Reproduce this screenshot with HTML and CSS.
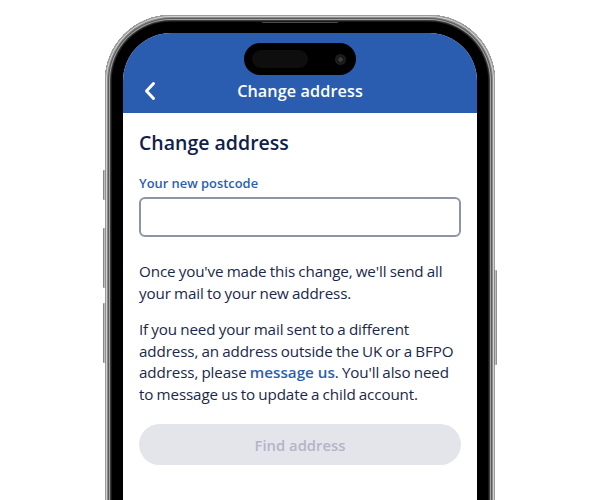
FILE: index.html
```html
<!DOCTYPE html>
<html lang="en">
<head>
<meta charset="utf-8">
<title>Change address</title>
<link rel="stylesheet" href="styles.css">
</head>
<body>
<div class="stage">
  <div class="phone">
    <span class="side-btn action"></span>
    <span class="side-btn vol-up"></span>
    <span class="side-btn vol-down"></span>
    <span class="side-btn power"></span>
    <div class="bezel">
      <span class="speaker"></span>
      <div class="screen">
        <header class="appbar">
          <div class="island"><span class="island-sensor"></span><span class="island-cam"></span></div>
          <div class="nav">
            <div class="nav-left">
              <svg class="back" width="14" height="20" viewBox="0 0 14 20" aria-hidden="true"><path d="M10.5 2.5 L3.5 10 L10.5 17.5"/></svg>
            </div>
            <h1 class="nav-title">Change address</h1>
            <div class="nav-right"></div>
          </div>
        </header>
        <main class="content">
          <h2 class="title">Change address</h2>
          <label class="label" for="postcode">Your new postcode</label>
          <input id="postcode" class="field" type="text">
          <p class="para">Once you've made this change, we'll send all your mail to your new address.</p>
          <p class="para">If you need your mail sent to a different address, an address outside the UK or a BFPO address, please <a class="link" href="#">message us</a>. You'll also need to message us to update a child account.</p>
          <button class="cta" type="button" disabled>Find address</button>
        </main>
      </div>
    </div>
  </div>
</div>
</body>
</html>
```

FILE: styles.css
```css
html, body {
  margin: 0;
  padding: 0;
  background: #ffffff;
}

body {
  width: 600px;
  height: 500px;
  overflow: hidden;
  font-family: "Open Sans", "Noto Sans", sans-serif;
}

.stage {
  display: flex;
  justify-content: center;
  padding-top: 15px;
  height: 500px;
  box-sizing: border-box;
  overflow: hidden;
}

.phone {
  position: relative;
  flex: none;
  width: 390px;
  height: 780px;
  box-sizing: border-box;
  padding: 7px;
  border-radius: 66px;
  background: #000;
  box-shadow:
    inset 0 0 0 1px #9a9a9a,
    inset 0 0 0 2px #d2d2d2,
    inset 0 0 0 3px #8a8a8a,
    inset 0 0 0 4px #5c5c5c,
    inset 0 0 0 5px #a0a0a0,
    inset 0 0 0 6px #3a3a3a,
    inset 0 0 0 7px #1a1a1a;
}

.side-btn {
  position: absolute;
  width: 3px;
  border-radius: 1px;
  background: linear-gradient(to right, #6a6a6a, #bdbdbd 50%, #7a7a7a);
}

.side-btn.action { left: -2px; top: 155px; height: 30px; }
.side-btn.vol-up { left: -2px; top: 213px; height: 60px; }
.side-btn.vol-down { left: -2px; top: 288px; height: 60px; }
.side-btn.power { right: -2px; top: 255px; height: 95px; }

.bezel {
  position: relative;
  height: 100%;
  box-sizing: border-box;
  padding: 11px;
  border-radius: 59px;
  background: #000;
}

.speaker {
  position: absolute;
  top: 0;
  left: 50%;
  width: 76px;
  height: 1px;
  margin-left: -38px;
  background: #4a4a4a;
  border-radius: 1px;
}

.screen {
  height: 100%;
  border-radius: 48px;
  overflow: hidden;
  background: #ffffff;
}

.appbar {
  background: #2a5db0;
  height: 80px;
  display: flex;
  flex-direction: column;
  align-items: center;
}

.island {
  margin-top: 10px;
  width: 112px;
  height: 32px;
  border-radius: 16px;
  background: #000;
  display: flex;
  align-items: center;
  justify-content: space-between;
  padding: 0 10px 0 8px;
  box-sizing: border-box;
}

.island-sensor {
  width: 56px;
  height: 18px;
  border-radius: 9px;
  background: #0e0e0e;
}

.island-cam {
  width: 11px;
  height: 11px;
  border-radius: 50%;
  background: radial-gradient(circle, #3a3a3a 0 25%, #161616 35%, #1e1e1e 60%, #111 100%);
}

.nav {
  width: 100%;
  height: 32px;
  display: grid;
  grid-template-columns: 1fr auto 1fr;
  align-items: center;
}

.nav-left {
  display: flex;
  align-items: center;
  padding-left: 20px;
}

.back {
  display: block;
  fill: none;
  stroke: #ffffff;
  stroke-width: 3;
  stroke-linecap: round;
  stroke-linejoin: round;
}

.nav-title {
  margin: 0;
  color: #ffffff;
  font-size: 16.2px;
  font-weight: 600;
  line-height: 20px;
  letter-spacing: 0.1px;
}

.content {
  display: flex;
  flex-direction: column;
  padding: 17px 16px 0;
  color: #1a284c;
}

.title {
  margin: 0;
  font-size: 19.5px;
  font-weight: 600;
  line-height: 26px;
  color: #0f2148;
}

.label {
  margin-top: 18px;
  font-size: 12.9px;
  font-weight: 600;
  line-height: 18px;
  color: #2b5fb3;
}

.field {
  margin-top: 5px;
  height: 40px;
  box-sizing: border-box;
  border: 2px solid #8d94a8;
  border-radius: 6px;
  background: #fff;
  font: inherit;
  padding: 0 10px;
}

.para {
  margin: 0;
  font-size: 15.2px;
  line-height: 21.5px;
  letter-spacing: -0.12px;
  word-spacing: -0.6px;
}

.para + .para {
  margin-top: 15px;
}

.field + .para {
  margin-top: 24px;
}

.link {
  color: #2b5fb3;
  font-weight: 600;
  letter-spacing: 0;
  word-spacing: 0;
  text-decoration: none;
}

.cta {
  margin-top: 19px;
  height: 41px;
  border: none;
  border-radius: 21px;
  background: #e4e5eb;
  color: #b1b5c7;
  font-family: inherit;
  font-size: 14.8px;
  font-weight: 600;
}
```
